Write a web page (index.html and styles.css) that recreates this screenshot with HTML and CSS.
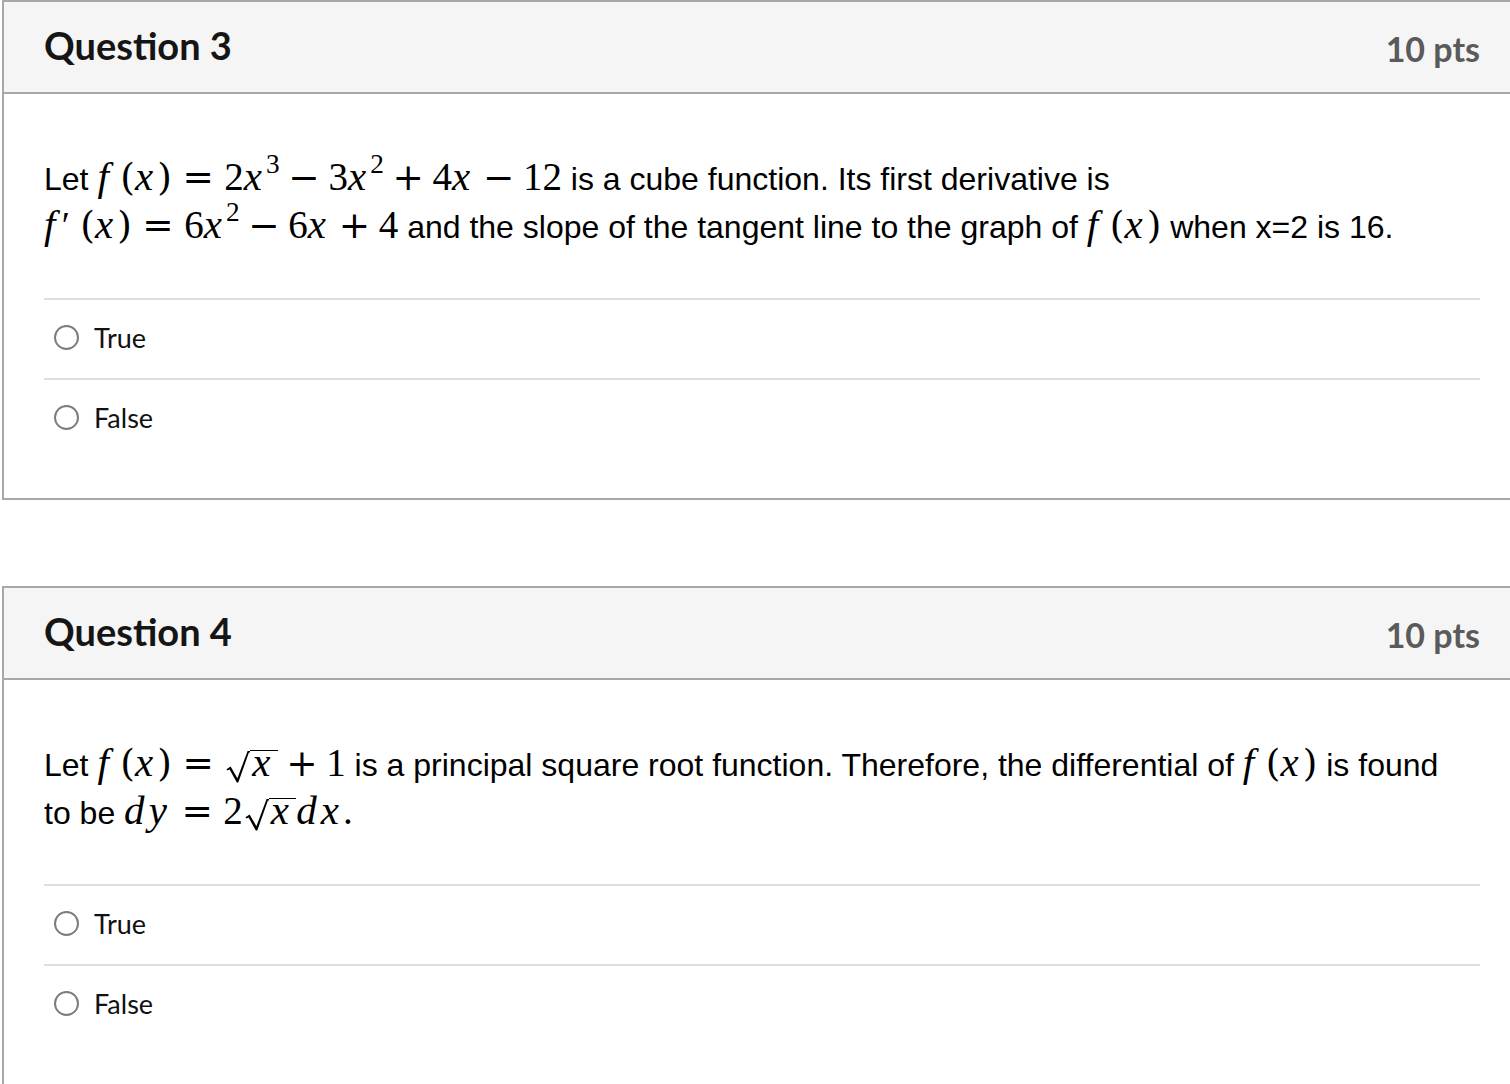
FILE: index.html
```html
<!DOCTYPE html>
<html lang="en">
<head>
<meta charset="utf-8">
<title>Quiz</title>
<link rel="stylesheet" href="styles.css">
</head>
<body>
<div class="quiz">
  <section class="card">
    <header class="card-head">
      <h2 class="q-title">Question 3</h2>
      <span class="q-pts">10 pts</span>
    </header>
    <div class="card-body">
      <p class="q-text">Let <span class="m"><span class="v">f</span><span class="op lp">(</span><span class="v">x</span><span class="op">)</span><span class="op rel">=</span>2<span class="v">x</span><span class="sup">3</span><span class="op bin">−</span>3<span class="v">x</span><span class="sup">2</span><span class="op bin">+</span>4<span class="v">x</span><span class="op bin">−</span>12</span> is a cube function. Its first derivative is<br><span class="m"><span class="v">f</span><span class="prime">′</span><span class="op lp">(</span><span class="v">x</span><span class="op">)</span><span class="op rel">=</span>6<span class="v">x</span><span class="sup">2</span><span class="op bin">−</span>6<span class="v">x</span><span class="op bin">+</span>4</span> and the slope of the tangent line to the graph of <span class="m"><span class="v">f</span><span class="op lp">(</span><span class="v">x</span><span class="op">)</span></span> when x=2 is 16.</p>
      <div class="options">
        <label class="opt"><span class="radio"></span><span class="opt-label">True</span></label>
        <label class="opt"><span class="radio"></span><span class="opt-label">False</span></label>
      </div>
    </div>
  </section>

  <section class="card">
    <header class="card-head">
      <h2 class="q-title">Question 4</h2>
      <span class="q-pts">10 pts</span>
    </header>
    <div class="card-body">
      <p class="q-text">Let <span class="m"><span class="v">f</span><span class="op lp">(</span><span class="v">x</span><span class="op">)</span><span class="op rel">=</span><span class="sqrt"><svg class="radic" viewBox="0 0 24 32" width="24" height="32" aria-hidden="true"><path d="M0.5 18.2 L4.6 15.6 L11.4 27.2 L21.6 0 L24 0 L24 1.6 L22.9 1.6 L12.3 31.5 L10.8 31.5 L3.6 18.4 L1.1 19.6 Z" fill="#000"/></svg><span class="radicand"><span class="v">x</span></span></span><span class="op bin">+</span>1</span> is a principal square root function. Therefore, the differential of <span class="m"><span class="v">f</span><span class="op lp">(</span><span class="v">x</span><span class="op">)</span></span> is found<br>to be <span class="m"><span class="v">dy</span><span class="op rel">=</span>2<span class="sqrt"><svg class="radic" viewBox="0 0 24 32" width="24" height="32" aria-hidden="true"><path d="M0.5 18.2 L4.6 15.6 L11.4 27.2 L21.6 0 L24 0 L24 1.6 L22.9 1.6 L12.3 31.5 L10.8 31.5 L3.6 18.4 L1.1 19.6 Z" fill="#000"/></svg><span class="radicand"><span class="v">x</span></span></span><span class="v">dx</span>.</span></p>
      <div class="options">
        <label class="opt"><span class="radio"></span><span class="opt-label">True</span></label>
        <label class="opt"><span class="radio"></span><span class="opt-label">False</span></label>
      </div>
    </div>
  </section>
</div>
</body>
</html>
```
FILE: styles.css
```css
html, body {
  margin: 0;
  padding: 0;
  overflow: hidden;
  background: #ffffff;
}

.quiz {
  display: flex;
  flex-direction: column;
  gap: 86px;
  padding-left: 2px;
  width: 1518px;
}

.card {
  border: 2px solid #a8a8a8;
  border-right: none;
  background: #fff;
}

.card-head {
  height: 92px;
  box-sizing: border-box;
  background: #f5f5f5;
  border-bottom: 2px solid #a8a8a8;
  display: flex;
  align-items: center;
  justify-content: space-between;
  padding: 0 40px;
  font-family: Lato, "Liberation Sans", sans-serif;
}

.q-title {
  margin: 0 0 5px 0;
  font-size: 38px;
  font-weight: 700;
  color: #151515;
}

.q-pts {
  margin-top: 2px;
  font-size: 34px;
  font-weight: 700;
  color: #5a5a5a;
}

.card-body {
  padding: 61px 40px 40px 40px;
}

.q-text {
  margin: 0 0 47px 0;
  font-family: "Liberation Sans", Arial, sans-serif;
  font-size: 32px;
  line-height: 48px;
  color: #000;
}

.m {
  font-family: "Liberation Serif", "Times New Roman", serif;
  font-size: 1.22em;
  line-height: 1;
  white-space: nowrap;
}

.v {
  font-style: italic;
  font-size: 1.05em;
  letter-spacing: 0.1em;
}

.op {
  font-family: "DejaVu Serif", serif;
  font-size: 0.96em;
}

.lp {
  margin-left: 0.2em;
}

.rel {
  margin: 0 0.28em;
}

.bin {
  margin: 0 0.23em;
}

.sup {
  font-size: 0.7em;
  vertical-align: 0.62em;
  line-height: 0;
}

.prime {
  font-size: 0.95em;
  margin: 0 0.08em 0 0.06em;
}

.sqrt {
  white-space: nowrap;
}

.radic {
  vertical-align: -7px;
  margin-left: 2px;
}

.radicand {
  display: inline-block;
  border-top: 1.6px solid #000;
  padding: 0 3px 0 2px;
  line-height: 0.6em;
  vertical-align: baseline;
}

.options {
  display: flex;
  flex-direction: column;
}

.opt {
  display: flex;
  align-items: center;
  gap: 15px;
  height: 80px;
  box-sizing: border-box;
  border-top: 2px solid #dedede;
  padding: 0 0 4px 10px;
  font-family: Lato, "Liberation Sans", sans-serif;
  font-size: 27px;
  color: #111;
}

.radio {
  width: 25px;
  height: 25px;
  box-sizing: border-box;
  border: 2px solid #7c7c7c;
  border-radius: 50%;
  flex: none;
}
```
